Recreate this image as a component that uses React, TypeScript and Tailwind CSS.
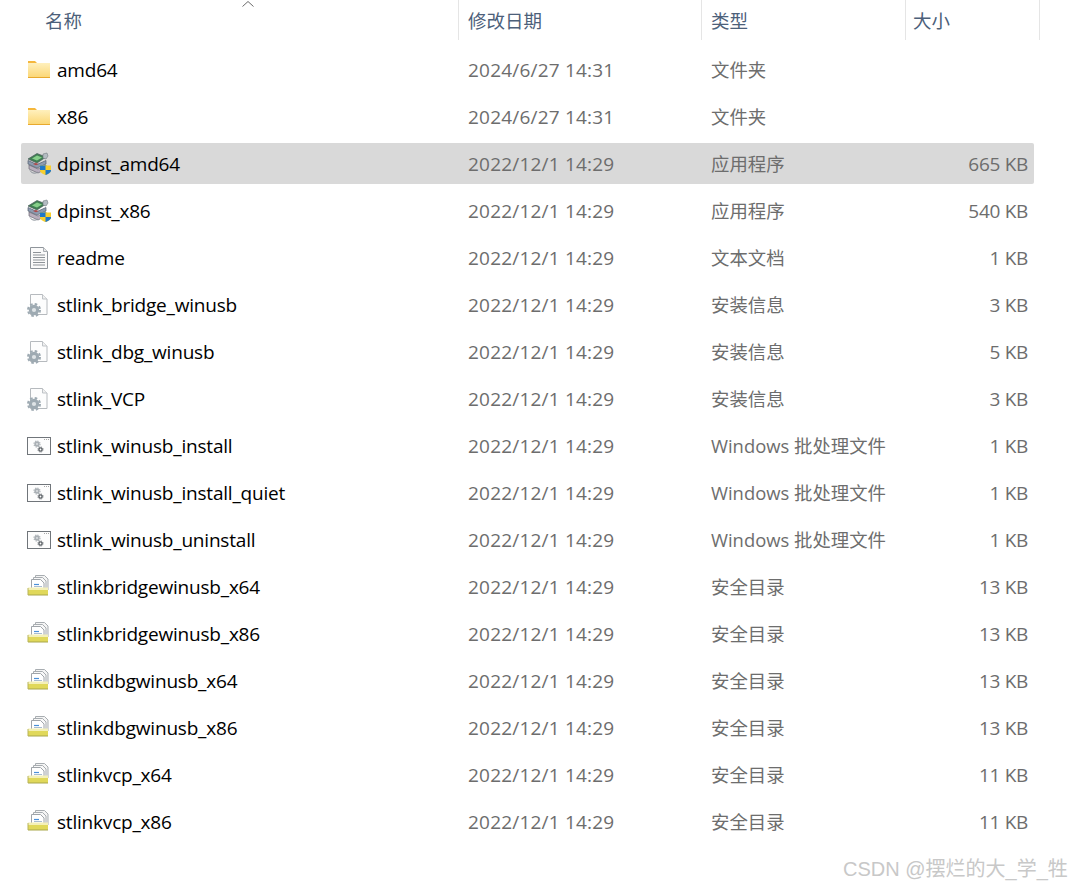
const FONT = "font-['Open_Sans','Noto_Sans_CJK_SC',sans-serif]";

type Kind = "folder" | "setup" | "text" | "inf" | "bat" | "cat";

const rows: { name: string; date: string; type: string; size: string; kind: Kind; selected?: boolean }[] = [
  { name: "amd64", date: "2024/6/27 14:31", type: "文件夹", size: "", kind: "folder" },
  { name: "x86", date: "2024/6/27 14:31", type: "文件夹", size: "", kind: "folder" },
  { name: "dpinst_amd64", date: "2022/12/1 14:29", type: "应用程序", size: "665 KB", kind: "setup", selected: true },
  { name: "dpinst_x86", date: "2022/12/1 14:29", type: "应用程序", size: "540 KB", kind: "setup" },
  { name: "readme", date: "2022/12/1 14:29", type: "文本文档", size: "1 KB", kind: "text" },
  { name: "stlink_bridge_winusb", date: "2022/12/1 14:29", type: "安装信息", size: "3 KB", kind: "inf" },
  { name: "stlink_dbg_winusb", date: "2022/12/1 14:29", type: "安装信息", size: "5 KB", kind: "inf" },
  { name: "stlink_VCP", date: "2022/12/1 14:29", type: "安装信息", size: "3 KB", kind: "inf" },
  { name: "stlink_winusb_install", date: "2022/12/1 14:29", type: "Windows 批处理文件", size: "1 KB", kind: "bat" },
  { name: "stlink_winusb_install_quiet", date: "2022/12/1 14:29", type: "Windows 批处理文件", size: "1 KB", kind: "bat" },
  { name: "stlink_winusb_uninstall", date: "2022/12/1 14:29", type: "Windows 批处理文件", size: "1 KB", kind: "bat" },
  { name: "stlinkbridgewinusb_x64", date: "2022/12/1 14:29", type: "安全目录", size: "13 KB", kind: "cat" },
  { name: "stlinkbridgewinusb_x86", date: "2022/12/1 14:29", type: "安全目录", size: "13 KB", kind: "cat" },
  { name: "stlinkdbgwinusb_x64", date: "2022/12/1 14:29", type: "安全目录", size: "13 KB", kind: "cat" },
  { name: "stlinkdbgwinusb_x86", date: "2022/12/1 14:29", type: "安全目录", size: "13 KB", kind: "cat" },
  { name: "stlinkvcp_x64", date: "2022/12/1 14:29", type: "安全目录", size: "11 KB", kind: "cat" },
  { name: "stlinkvcp_x86", date: "2022/12/1 14:29", type: "安全目录", size: "11 KB", kind: "cat" },
];

// 8 toothed gear, teeth are a dashed ring
function Gear({ x, y, r, fill, hole = "#f4f4f4" }: { x: number; y: number; r: number; fill: string; hole?: string }) {
  const ring = r * 0.85;
  const dash = (2 * Math.PI * ring) / 8;
  return (
    <g>
      <circle cx={x} cy={y} r={ring} fill="none" stroke={fill} strokeWidth={r * 0.3} strokeDasharray={`${dash * 0.55} ${dash * 0.45}`} />
      <circle cx={x} cy={y} r={r * 0.74} fill={fill} />
      <circle cx={x} cy={y} r={r * 0.3} fill={hole} />
    </g>
  );
}

function FileIcon({ kind }: { kind: Kind }) {
  if (kind === "folder") {
    return (
      <svg width="24" height="24" viewBox="0 0 24 24">
        <defs>
          <linearGradient id="fold" x1="0" y1="0" x2="0" y2="1">
            <stop offset="0" stopColor="#fff0bd" />
            <stop offset="1" stopColor="#fbd673" />
          </linearGradient>
        </defs>
        <path d="M1 3h7l2 2h13v2H1z" fill="#f5b73c" />
        <rect x="1" y="5" width="22" height="15" fill="url(#fold)" />
        <rect x="1" y="19" width="22" height="1" fill="#e8a92e" />
      </svg>
    );
  }
  if (kind === "setup") {
    return (
      <svg width="24" height="24" viewBox="0 0 24 24">
        <path d="M2 13l9 4 8-4v4l-8 4-9-4z" fill="#b9aebd" stroke="#6a6874" strokeWidth="0.7" />
        <path d="M1 8.500l9 4 9-4v3.500l-9 4-9-4z" fill="#8d9bb0" stroke="#56606e" strokeWidth="0.7" />
        <path d="M1 7l9-5.500 9 3.500-9 6z" fill="#3f7f52" stroke="#4b5a5c" strokeWidth="0.7" />
        <path d="M5 6.500l5-3 5 2-5 3z" fill="#86cf8a" />
        <path d="M16 2l4-1 1 3-2 3-3-1z" fill="#b4bcc2" stroke="#737c82" strokeWidth="0.6" />
        <path d="M6 12l3 1.300 2.500-1.300-2.500-1z" fill="#b04a4a" />
        <path d="M3 18.500c2 3.500 6 3 8 1.500" fill="none" stroke="#8a9199" strokeWidth="1" />
        <path d="M13 13.500h11v5c0 2-3 3.700-5.500 4.500C16 22.200 13 20.500 13 18.500z" fill="#f8cf2e" />
        <path d="M13 13.500h5.500V18H13z" fill="#1f78c8" />
        <path d="M18.500 18H24v.5c0 2-3 3.700-5.500 4.500z" fill="#1f78c8" />
      </svg>
    );
  }
  if (kind === "text") {
    return (
      <svg width="24" height="24" viewBox="0 0 24 24">
        <path d="M3.500 1.500h13l4 4v17h-17z" fill="#fafafa" stroke="#8f959b" />
        <path d="M16.500 1.500v4h4" fill="#e8e8e8" stroke="#a8adb2" />
        <path d="M6 6.500h8M6 9h12M6 11.500h12M6 14h12M6 16.500h12M6 19h12" stroke="#8e9398" strokeWidth="1" />
      </svg>
    );
  }
  if (kind === "inf") {
    return (
      <svg width="24" height="24" viewBox="0 0 24 24">
        <path d="M3.500 1.500h12l4.500 4.500v15.500h-16.500z" fill="#fdfdfd" stroke="#b6babe" />
        <path d="M15.500 1.500V6h4.500" fill="#f0f0f0" stroke="#bfc3c7" />
        <Gear x={7} y={17} r={7} fill="#9eaab2" hole="#dfe4e7" />
      </svg>
    );
  }
  if (kind === "bat") {
    return (
      <svg width="24" height="24" viewBox="0 0 24 24">
        <rect x="0.500" y="3.500" width="23" height="17" fill="#fdfdfd" stroke="#70757a" />
        <path d="M17 5.500h5" stroke="#a8a8a8" strokeWidth="1" strokeDasharray="1 1" />
        <Gear x={10} y={10} r={3.600} fill="#aab0b5" hole="#d8dbde" />
        <Gear x={13.500} y={15.500} r={3} fill="#5e6368" hole="#ffffff" />
      </svg>
    );
  }
  return (
    <svg width="24" height="24" viewBox="0 0 24 24">
      <path d="M8.500 0.500h9l3.500 3.500v11h-12.500z" fill="#f4f4f4" stroke="#a8adb1" />
      <path d="M6.500 2.500h9l3.500 3.500v9h-12.500z" fill="#f8f8f8" stroke="#a8adb1" />
      <path d="M4.500 4.500h9l3.500 3.500v7h-12.500z" fill="#ffffff" stroke="#a0a5aa" />
      <path d="M7 9.500h5" stroke="#4a90d9" strokeWidth="1.200" />
      <path d="M7 11.500h8" stroke="#a8bcd0" strokeWidth="1" />
      <path d="M1 14h20v6H1z" fill="#e0d85a" />
      <path d="M1 12.500h20v2.500H1z" fill="#f4f0b8" />
      <path d="M1 19.500h20v1H1z" fill="#a9a64a" />
      <path d="M1 13v7" stroke="#b8b45a" strokeWidth="1" />
    </svg>
  );
}

function HeaderCell({ label, className }: { label: string; className: string }) {
  return (
    <div className={`h-10 border-r border-[#e5e5e5] pt-px text-[18.5px] leading-10 text-[#4c607a] ${className}`}>{label}</div>
  );
}

export default function App() {
  return (
    <div className={`relative h-[886px] w-[1070px] overflow-hidden bg-white ${FONT}`}>
      <div className="flex pl-[45px]">
        <HeaderCell label="名称" className="w-[414px]" />
        <HeaderCell label="修改日期" className="w-[243px] pl-[9px]" />
        <HeaderCell label="类型" className="w-[204px] pl-[9px]" />
        <HeaderCell label="大小" className="w-[134px] pl-[7px]" />
      </div>
      {/* sort arrow */}
      <svg className="absolute left-[242px] top-0" width="12" height="8" viewBox="0 0 12 8">
        <path d="M0.500 6.500L6 1.500l5.500 5" fill="none" stroke="#6b6b6b" strokeWidth="1" />
      </svg>
      <div className="ml-[21px] flex w-[1013px] flex-col gap-[6px] pt-[9px]">
        {rows.map((r) => (
          <div
            key={r.name}
            className={`flex h-[41px] items-center rounded-[2px] text-[19px] ${r.selected ? "bg-[#d9d9d9]" : ""}`}
          >
            <div className="flex w-[447px] items-center gap-[6px] pl-[6px] text-black">
              <FileIcon kind={r.kind} />
              <span className="pt-[2px] tracking-[-0.2px]">{r.name}</span>
            </div>
            <div className="w-[243px] pt-[2px] tracking-[0.2px] text-[#6d6d6d]">{r.date}</div>
            <div className="flex-1 text-[18.4px] text-[#6d6d6d]">{r.type}</div>
            <div className="pt-[2px] pr-[6px] tracking-[-0.3px] text-[#6d6d6d]">{r.size}</div>
          </div>
        ))}
      </div>
      {/* csdn watermark */}
      <div className="absolute left-[843px] top-[856px] font-['Liberation_Sans','Noto_Sans_CJK_SC',sans-serif] text-[20px] leading-[26px] whitespace-nowrap text-[#c8c8c8]">
        CSDN @摆烂的大_学_牲
      </div>
    </div>
  );
}
